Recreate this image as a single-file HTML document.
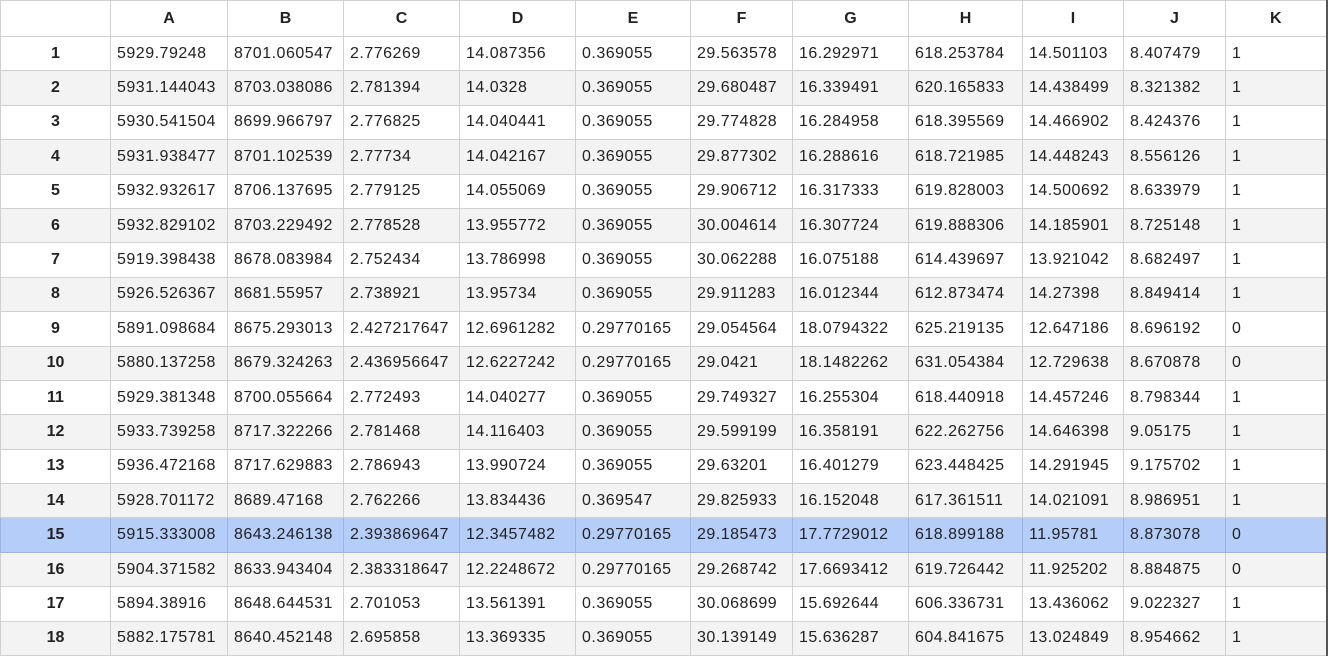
<!DOCTYPE html><html><head><style>
body{margin:0;background:#fff;font-family:"Liberation Sans",Arial,sans-serif;font-size:16px;letter-spacing:0.5px;color:#222}
table{border-collapse:collapse;table-layout:fixed;position:absolute;left:0;top:0;width:1326px}
td,th{border:1px solid #d0d0d0;padding:0 0 0 6px;height:33.4px;white-space:nowrap;overflow:hidden;text-align:left;font-weight:normal}
th{font-weight:bold;text-align:center;padding:0;height:35px;letter-spacing:0}
td.r{text-align:center;font-weight:bold;padding:0;letter-spacing:0}
tr:nth-child(odd) td{background:#f3f3f3}
tr.h td{background:#b4cdf9;border-color:#9db3e0}
table{border-right:2px solid #555}
</style></head><body>
<table>
<colgroup><col style="width:110px"><col style="width:117px"><col style="width:116px"><col style="width:116px"><col style="width:116px"><col style="width:115px"><col style="width:102px"><col style="width:116px"><col style="width:114px"><col style="width:101px"><col style="width:102px"><col style="width:101px"></colgroup>
<tr><th></th><th>A</th><th>B</th><th>C</th><th>D</th><th>E</th><th>F</th><th>G</th><th>H</th><th>I</th><th>J</th><th>K</th></tr>
<tr><td class="r">1</td><td>5929.79248</td><td>8701.060547</td><td>2.776269</td><td>14.087356</td><td>0.369055</td><td>29.563578</td><td>16.292971</td><td>618.253784</td><td>14.501103</td><td>8.407479</td><td>1</td></tr>
<tr><td class="r">2</td><td>5931.144043</td><td>8703.038086</td><td>2.781394</td><td>14.0328</td><td>0.369055</td><td>29.680487</td><td>16.339491</td><td>620.165833</td><td>14.438499</td><td>8.321382</td><td>1</td></tr>
<tr><td class="r">3</td><td>5930.541504</td><td>8699.966797</td><td>2.776825</td><td>14.040441</td><td>0.369055</td><td>29.774828</td><td>16.284958</td><td>618.395569</td><td>14.466902</td><td>8.424376</td><td>1</td></tr>
<tr><td class="r">4</td><td>5931.938477</td><td>8701.102539</td><td>2.77734</td><td>14.042167</td><td>0.369055</td><td>29.877302</td><td>16.288616</td><td>618.721985</td><td>14.448243</td><td>8.556126</td><td>1</td></tr>
<tr><td class="r">5</td><td>5932.932617</td><td>8706.137695</td><td>2.779125</td><td>14.055069</td><td>0.369055</td><td>29.906712</td><td>16.317333</td><td>619.828003</td><td>14.500692</td><td>8.633979</td><td>1</td></tr>
<tr><td class="r">6</td><td>5932.829102</td><td>8703.229492</td><td>2.778528</td><td>13.955772</td><td>0.369055</td><td>30.004614</td><td>16.307724</td><td>619.888306</td><td>14.185901</td><td>8.725148</td><td>1</td></tr>
<tr><td class="r">7</td><td>5919.398438</td><td>8678.083984</td><td>2.752434</td><td>13.786998</td><td>0.369055</td><td>30.062288</td><td>16.075188</td><td>614.439697</td><td>13.921042</td><td>8.682497</td><td>1</td></tr>
<tr><td class="r">8</td><td>5926.526367</td><td>8681.55957</td><td>2.738921</td><td>13.95734</td><td>0.369055</td><td>29.911283</td><td>16.012344</td><td>612.873474</td><td>14.27398</td><td>8.849414</td><td>1</td></tr>
<tr><td class="r">9</td><td>5891.098684</td><td>8675.293013</td><td>2.427217647</td><td>12.6961282</td><td>0.29770165</td><td>29.054564</td><td>18.0794322</td><td>625.219135</td><td>12.647186</td><td>8.696192</td><td>0</td></tr>
<tr><td class="r">10</td><td>5880.137258</td><td>8679.324263</td><td>2.436956647</td><td>12.6227242</td><td>0.29770165</td><td>29.0421</td><td>18.1482262</td><td>631.054384</td><td>12.729638</td><td>8.670878</td><td>0</td></tr>
<tr><td class="r">11</td><td>5929.381348</td><td>8700.055664</td><td>2.772493</td><td>14.040277</td><td>0.369055</td><td>29.749327</td><td>16.255304</td><td>618.440918</td><td>14.457246</td><td>8.798344</td><td>1</td></tr>
<tr><td class="r">12</td><td>5933.739258</td><td>8717.322266</td><td>2.781468</td><td>14.116403</td><td>0.369055</td><td>29.599199</td><td>16.358191</td><td>622.262756</td><td>14.646398</td><td>9.05175</td><td>1</td></tr>
<tr><td class="r">13</td><td>5936.472168</td><td>8717.629883</td><td>2.786943</td><td>13.990724</td><td>0.369055</td><td>29.63201</td><td>16.401279</td><td>623.448425</td><td>14.291945</td><td>9.175702</td><td>1</td></tr>
<tr><td class="r">14</td><td>5928.701172</td><td>8689.47168</td><td>2.762266</td><td>13.834436</td><td>0.369547</td><td>29.825933</td><td>16.152048</td><td>617.361511</td><td>14.021091</td><td>8.986951</td><td>1</td></tr>
<tr class="h"><td class="r">15</td><td>5915.333008</td><td>8643.246138</td><td>2.393869647</td><td>12.3457482</td><td>0.29770165</td><td>29.185473</td><td>17.7729012</td><td>618.899188</td><td>11.95781</td><td>8.873078</td><td>0</td></tr>
<tr><td class="r">16</td><td>5904.371582</td><td>8633.943404</td><td>2.383318647</td><td>12.2248672</td><td>0.29770165</td><td>29.268742</td><td>17.6693412</td><td>619.726442</td><td>11.925202</td><td>8.884875</td><td>0</td></tr>
<tr><td class="r">17</td><td>5894.38916</td><td>8648.644531</td><td>2.701053</td><td>13.561391</td><td>0.369055</td><td>30.068699</td><td>15.692644</td><td>606.336731</td><td>13.436062</td><td>9.022327</td><td>1</td></tr>
<tr><td class="r">18</td><td>5882.175781</td><td>8640.452148</td><td>2.695858</td><td>13.369335</td><td>0.369055</td><td>30.139149</td><td>15.636287</td><td>604.841675</td><td>13.024849</td><td>8.954662</td><td>1</td></tr>
</table></body></html>
